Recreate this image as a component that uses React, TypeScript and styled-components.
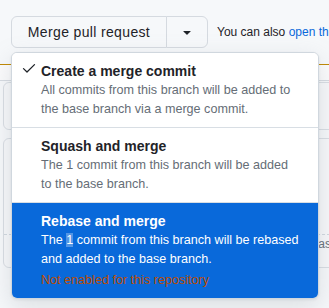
import React from "react";
import styled, { createGlobalStyle } from "styled-components";

const Global = createGlobalStyle`
  html, body { margin: 0; padding: 0; }
  body {
    background: #f6f8fa;
    font-family: "Liberation Sans", Arial, sans-serif;
    color: #1f2328;
    -webkit-font-smoothing: antialiased;
  }
`;

const Page = styled.div`
  position: relative;
  width: 329px;
  height: 308px;
  overflow: hidden;
  background: #f6f8fa;
`;

const Toolbar = styled.div`
  display: flex;
  align-items: center;
  gap: 9px;
  padding: 16px 0 0 11px;
  height: 32px;
`;

const ButtonGroup = styled.div`
  display: flex;
  flex: none;
`;

const GroupButton = styled.button<{ $w: number; $first?: boolean }>`
  width: ${(p) => p.$w}px;
  height: 32px;
  display: flex;
  align-items: center;
  justify-content: center;
  padding: 0;
  margin-left: ${(p) => (p.$first ? 0 : -1)}px;
  background: #f6f8fa;
  border: 1px solid #d5dae0;
  border-radius: ${(p) => (p.$first ? "6px 0 0 6px" : "0 6px 6px 0")};
  font-family: "Liberation Sans", Arial, sans-serif;
  font-size: 14px;
  letter-spacing: 0.35px;
  color: #1f2328;
`;

const Hint = styled.div`
  font-size: 12px;
  white-space: nowrap;
  color: #1f2328;
`;

const Link = styled.span`
  color: #0969da;
`;

const MergeBar = styled.div`
  margin-top: 16px;
  height: 15px;
  background: #fbfbfc;
  border-top: 1px solid #bf8700;
  border-bottom: 1px solid #d5dae0;
`;

const Cards = styled.div`
  display: flex;
  flex-direction: column;
  gap: 8px;
  padding: 1px 0 0 3px;
`;

const Card = styled.div<{ $h: number }>`
  width: 333px;
  height: ${(p) => p.$h}px;
  box-sizing: border-box;
  border: 1px solid #d8dde3;
  border-radius: 6px;
  background: #f7f8fa;
  display: flex;
  flex-direction: column;
  justify-content: flex-end;
`;

const CardFooter = styled.div`
  border-top: 1px dashed #d0d7de;
  height: 30px;
  display: flex;
  justify-content: flex-end;
  padding: 2px 4px 0 0;
  font-size: 12px;
  color: #656d76;
`;

const Menu = styled.div`
  position: absolute;
  top: 52px;
  left: 11px;
  width: 308px;
  box-sizing: border-box;
  background: #ffffff;
  border: 1px solid #d0d7de;
  border-radius: 6px;
  overflow: hidden;
  box-shadow: 0 8px 24px rgba(140, 149, 159, 0.25), 0 1px 3px rgba(31, 35, 40, 0.08);
`;

const Item = styled.div<{ $active?: boolean }>`
  position: relative;
  padding: 8px 8px 8px 29px;
  background: ${(p) => (p.$active ? "#0969da" : "#ffffff")};
  color: ${(p) => (p.$active ? "#ffffff" : "#1f2328")};
  & + & {
    border-top: 1px solid #d8dee4;
  }
`;

const CheckMark = styled.svg`
  position: absolute;
  left: 9px;
  top: 7px;
`;

const Title = styled.div`
  font-size: 14px;
  font-weight: 700;
  line-height: 20px;
`;

const Desc = styled.div<{ $active?: boolean }>`
  font-size: 12.6px;
  line-height: 19px;
  white-space: nowrap;
  color: ${(p) => (p.$active ? "#ffffff" : "#656d76")};
`;

const Selected = styled.span`
  background: rgba(255, 255, 255, 0.3);
`;

const Warning = styled.div`
  margin-top: 2px;
  font-size: 12.6px;
  line-height: 19px;
  color: #bc4c00;
`;

export default function App() {
  return (
    <Page>
      <Global />
      <Toolbar>
        <ButtonGroup>
          <GroupButton $w={156} $first>
            Merge pull request
          </GroupButton>
          <GroupButton $w={42}>
            <svg width="16" height="16" viewBox="0 0 16 16" fill="#1f2328">
              <path d="m4.427 7.427 3.396 3.396a.25.25 0 0 0 .354 0l3.396-3.396A.25.25 0 0 0 11.396 7H4.604a.25.25 0 0 0-.177.427Z" />
            </svg>
          </GroupButton>
        </ButtonGroup>
        <Hint>
          You can also <Link>open this in GitHub Desktop</Link>
        </Hint>
      </Toolbar>
      <MergeBar />
      <Cards>
        <Card $h={48} />
        <Card $h={130}>
          <CardFooter>as</CardFooter>
        </Card>
      </Cards>
      <Menu>
        <Item>
          <CheckMark width="16" height="16" viewBox="0 0 16 16">
            <polyline
              points="2.5,8.6 6,12 13.5,4.6"
              fill="none"
              stroke="#1f2328"
              strokeWidth="1.3"
              strokeLinecap="round"
              strokeLinejoin="round"
            />
          </CheckMark>
          <Title>Create a merge commit</Title>
          <Desc>
            All commits from this branch will be added to
            <br />
            the base branch via a merge commit.
          </Desc>
        </Item>
        <Item>
          <Title>Squash and merge</Title>
          <Desc>
            The 1 commit from this branch will be added
            <br />
            to the base branch.
          </Desc>
        </Item>
        <Item $active>
          <Title>Rebase and merge</Title>
          <Desc $active>
            The <Selected>1</Selected> commit from this branch will be rebased
            <br />
            and added to the base branch.
          </Desc>
          <Warning>Not enabled for this repository</Warning>
        </Item>
      </Menu>
    </Page>
  );
}
